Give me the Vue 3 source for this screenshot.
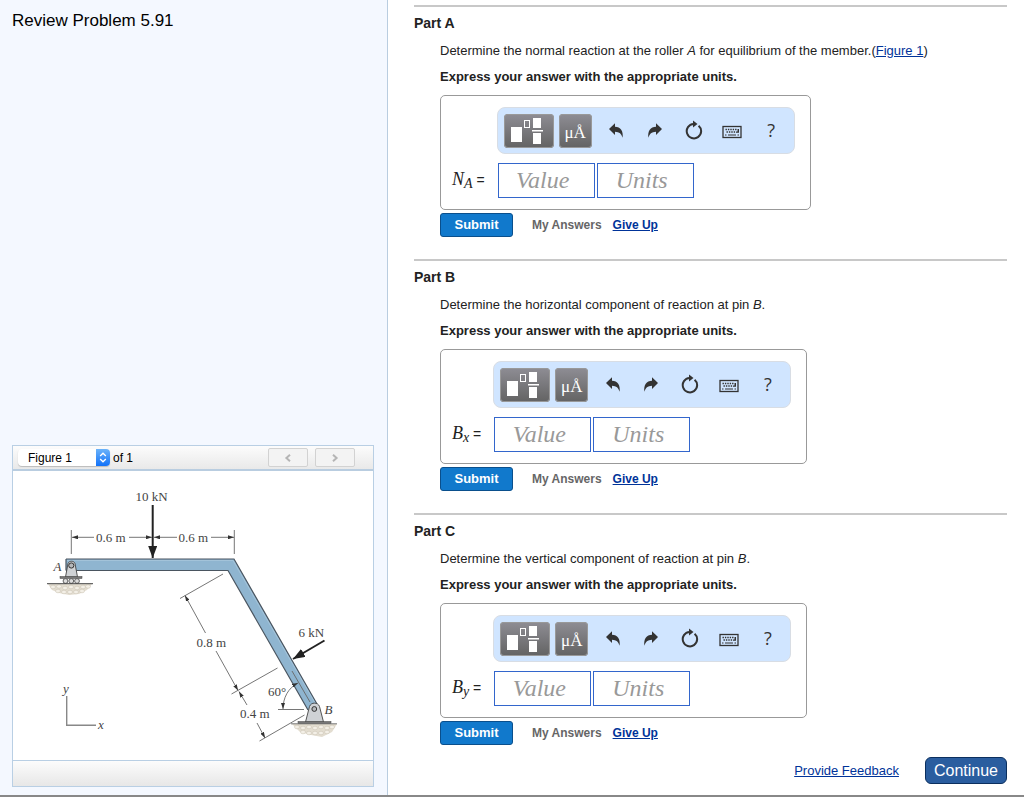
<template>
  <div class="page">
    <aside class="sidebar">
      <h1>Review Problem 5.91</h1>

      <section class="figure-panel">
        <div class="figure-bar">
          <label class="figure-select">
            <select v-model="figure" aria-label="Figure">
              <option value="1">Figure 1</option>
            </select>
            <svg class="stepper" viewBox="0 0 14 18" aria-hidden="true">
              <path d="M4 7.5l3-3 3 3M4 10.5l3 3 3-3" />
            </svg>
          </label>
          <span class="figure-count">of 1</span>
          <div class="figure-nav">
            <button type="button" aria-label="Previous figure">
              <svg viewBox="0 0 8 8"><path d="M6 0.8L2.4 4L6 7.2" /></svg>
            </button>
            <button type="button" aria-label="Next figure">
              <svg viewBox="0 0 8 8"><path d="M2 0.8L5.6 4L2 7.2" /></svg>
            </button>
          </div>
        </div>

        <svg class="diagram" viewBox="13 471 360 289" role="img" aria-label="Bent member with roller at A and pin at B">
          <defs>
            <marker id="tip" viewBox="0 0 6 4" refX="6" refY="2" markerWidth="6" markerHeight="4" markerUnits="userSpaceOnUse" orient="auto-start-reverse">
              <path d="M0 0L6 2L0 4z" fill="#333" />
            </marker>
            <marker id="load" viewBox="0 0 12 9" refX="12" refY="4.5" markerWidth="12" markerHeight="9" markerUnits="userSpaceOnUse" orient="auto">
              <path d="M0 0L12 4.5L0 9z" fill="#222" />
            </marker>
          </defs>

          <!-- ground -->
          <g class="ground">
            <path d="M48 584H92L87 590L79 594L69 595L59 593L52 590z" />
            <path d="M292 724H337L332 732L322 737L311 735L300 732z" />
            <ellipse v-for="(s, i) in stones" :key="i" :cx="s[0]" :cy="s[1]" rx="2.5" ry="1.8" />
          </g>

          <!-- member -->
          <path class="member" d="M66 559H234L317 704L308 710L228 570.5H66z" />
          <path class="edge" d="M66 559H234L317 704M66 570.5H228L308 710M66 559V570.5" />
          <path class="shine" d="M67 560.5H233L315 703" />

          <!-- roller A -->
          <path class="bracket" d="M65.5 577L68 563.5C69 560.5 74 560.5 75 563.5L77.5 577z" />
          <circle class="pin" cx="71.3" cy="565.5" r="2.6" />
          <rect class="plate" x="60" y="576.5" width="22" height="2" />
          <circle v-for="x in [65.5, 71.3, 77]" :key="x" class="wheel" :cx="x" cy="581" r="2.4" />
          <path class="thick" d="M47 583.7H93" />

          <!-- pin B -->
          <path class="bracket" d="M305.5 722L309.5 706.5C311 702 318 702 319.5 706.5L323.5 722z" />
          <circle class="pin" cx="314.3" cy="709" r="2.4" />
          <rect class="plate" x="298" y="721.5" width="33" height="2" />
          <path class="thin" d="M291 723.8H337" />

          <!-- loads -->
          <path class="force" d="M152.7 505V558" marker-end="url(#load)" />
          <path class="force" d="M324.5 640.5L293 659" marker-end="url(#load)" />

          <!-- dimensions -->
          <g class="thin">
            <path d="M71.3 530V554M234.3 530V554" />
            <path d="M94 537.3H72" marker-end="url(#tip)" />
            <path d="M129 537.3H152" marker-end="url(#tip)" />
            <path d="M177 537.3H154" marker-end="url(#tip)" />
            <path d="M211 537.3H234" marker-end="url(#tip)" />
            <path d="M180 598.5L223 574M231.5 694L277.5 668M259.5 741L304.5 715" />
            <path d="M205.5 633L185 595.5" marker-end="url(#tip)" />
            <path d="M216 651L238 690.5" marker-end="url(#tip)" />
            <path d="M247 705L239 691.5" marker-end="url(#tip)" />
            <path d="M257 723L265 738" marker-end="url(#tip)" />
            <path d="M278 709.5H304M292 671L310 702" />
            <path d="M283 709C283 698 288 688 298 683" marker-start="url(#tip)" marker-end="url(#tip)" />
          </g>
          <path class="axes" d="M66.7 696V725.3H96" />

          <g class="labels">
            <text x="135.5" y="501">10 kN</text>
            <text x="96" y="541.5">0.6 m</text>
            <text x="178.5" y="541.5">0.6 m</text>
            <text x="196.5" y="646.5">0.8 m</text>
            <text x="240" y="718">0.4 m</text>
            <text x="268" y="696">60°</text>
            <text x="298.5" y="637">6 kN</text>
            <text class="it" x="53.5" y="571">A</text>
            <text class="it" x="324.5" y="714">B</text>
            <text class="it" x="63" y="693">y</text>
            <text class="it" x="98" y="729">x</text>
          </g>
        </svg>

        <div class="figure-foot"></div>
      </section>
    </aside>

    <main class="content">
      <section class="part" v-for="part in parts" :key="part.id">
        <h2>Part {{ part.id }}</h2>
        <div class="part-body">
          <p>
            {{ part.text }} <i>{{ part.point }}</i>{{ part.rest }}<template v-if="part.link">(<a href="#">Figure 1</a>)</template>
          </p>
          <p class="express">Express your answer with the appropriate units.</p>

          <div class="answer">
            <div class="toolbar">
              <button type="button" class="tool-dark wide" aria-label="Templates">
                <svg viewBox="0 0 50 34">
                  <path d="M7 13H18V28H7zM29 4H37V14H29zM29 19H37V30H29zM28 16H39V17.5H28z" fill="#fff" />
                  <rect x="20.5" y="6.5" width="5" height="7" fill="none" stroke="#fff" />
                </svg>
              </button>
              <button type="button" class="tool-dark symbols" aria-label="Symbols">μÅ</button>
              <div class="tools">
                <button type="button" aria-label="Undo">
                  <svg viewBox="0 0 16 16">
                    <path d="M1 7L7 1.2V4.8C12.5 5 15.5 9 14.6 15.8C13.5 11.8 11.5 9.8 7 9.7V13z" />
                  </svg>
                </button>
                <button type="button" aria-label="Redo">
                  <svg viewBox="0 0 16 16">
                    <path d="M15 7L9 1.2V4.8C3.5 5 0.5 9 1.4 15.8C2.5 11.8 4.5 9.8 9 9.7V13z" />
                  </svg>
                </button>
                <button type="button" aria-label="Reset">
                  <svg class="large" viewBox="0 0 20 20">
                    <path d="M14.6 5.7A7.2 7.2 0 1 1 9.5 4" fill="none" stroke="#333" stroke-width="2" />
                    <path d="M9 0.5L13.5 4L9 7.5z" />
                  </svg>
                </button>
                <button type="button" aria-label="Keyboard">
                  <svg class="large" viewBox="0 0 20 20">
                    <rect x="1" y="6.5" width="18" height="11" fill="none" stroke="#333" stroke-width="1.3" />
                    <path d="M3.5 9.5H15M4.5 12H14" fill="none" stroke="#333" stroke-width="1.4" stroke-dasharray="1.4 1" />
                    <path d="M15.5 9H17V12.8H14V11.6H15.5zM3 14.4H4.5V15.6H3zM6 14.4H14V15.6H6zM15.5 14.4H17V15.6H15.5z" />
                  </svg>
                </button>
                <button type="button" class="help" aria-label="Help">?</button>
              </div>
            </div>
            <label class="symbol" :for="'value-' + part.id">
              <i>{{ part.symbol }}<sub>{{ part.sub }}</sub></i> =
            </label>
            <div class="fields">
              <input :id="'value-' + part.id" v-model="part.value" type="text" placeholder="Value" />
              <input v-model="part.units" type="text" placeholder="Units" aria-label="Units" />
            </div>
          </div>

          <div class="actions">
            <button type="button" class="submit">Submit</button>
            <span class="my-answers">My Answers</span>
            <a href="#">Give Up</a>
          </div>
        </div>
      </section>

      <footer class="footer">
        <a href="#">Provide Feedback</a>
        <button type="button" class="continue">Continue</button>
      </footer>
    </main>
  </div>
</template>

<script setup>
import { ref } from 'vue'

const figure = ref('1')

const parts = ref([
  {
    id: 'A',
    text: 'Determine the normal reaction at the roller',
    point: 'A',
    rest: ' for equilibrium of the member.',
    link: true,
    symbol: 'N',
    sub: 'A',
    value: '',
    units: ''
  },
  {
    id: 'B',
    text: 'Determine the horizontal component of reaction at pin',
    point: 'B',
    rest: '.',
    symbol: 'B',
    sub: 'x',
    value: '',
    units: ''
  },
  {
    id: 'C',
    text: 'Determine the vertical component of reaction at pin',
    point: 'B',
    rest: '.',
    symbol: 'B',
    sub: 'y',
    value: '',
    units: ''
  }
])

// stones under the two supports
const stones = [
  [53, 587], [59, 586.5], [65, 588], [71, 587], [77, 588], [83, 587], [88, 586.5],
  [58, 591], [64, 592], [70, 592], [76, 592], [82, 591],
  [297, 727], [303, 728], [309, 727], [315, 728], [321, 727], [327, 728], [332, 727],
  [303, 732], [309, 733], [315, 733], [321, 733], [327, 732]
]
</script>

<style>
body {
  margin: 0;
  background: #fff;
}
</style>

<style scoped>
* {
  box-sizing: border-box;
}
.page {
  display: flex;
  min-height: 100vh;
  border-bottom: 2px solid #888;
  font-family: "Liberation Sans", Arial, sans-serif;
  font-size: 13px;
  color: #222;
}
button {
  font-family: inherit;
  cursor: pointer;
}
a {
  color: #039;
}

/* left column */
.sidebar {
  flex: 0 0 388px;
  display: flex;
  flex-direction: column;
  padding: 11px 13px 8px 12px;
  background: #f4f8ff;
  border-right: 1px solid #b9cde0;
}
h1 {
  margin: 0;
  font-size: 17px;
  line-height: 20px;
  font-weight: normal;
  color: #000;
}
.figure-panel {
  margin-top: auto;
  border: 1px solid #b9cfe4;
  background: #fff;
}
.figure-bar {
  display: flex;
  align-items: center;
  height: 25px;
  padding: 0 18px 0 5px;
  background: linear-gradient(#fcfcfc, #e9e9e9);
  border-bottom: 2px solid #b9cde0;
  font-size: 12px;
  color: #000;
}
.figure-select {
  position: relative;
  display: flex;
}
.figure-select select {
  appearance: none;
  width: 92px;
  height: 17px;
  padding: 0 18px 0 10px;
  border: 0;
  border-radius: 4px;
  background: #fff;
  box-shadow: 0 1px 1px #bbb;
  font-family: inherit;
  font-size: 12px;
  color: #000;
}
.stepper {
  position: absolute;
  top: 0;
  right: 0;
  width: 14px;
  height: 17px;
  border-radius: 0 4px 4px 0;
  background: linear-gradient(#6bb3fa, #1272f9);
  pointer-events: none;
}
.stepper path {
  fill: none;
  stroke: #fff;
  stroke-width: 1.4;
}
.figure-count {
  margin-left: 3px;
}
.figure-nav {
  display: flex;
  gap: 7px;
  margin-left: auto;
}
.figure-nav button {
  display: flex;
  align-items: center;
  justify-content: center;
  width: 40px;
  height: 19px;
  padding: 0;
  border: 1px solid #d2d2d2;
  border-radius: 2px;
  background: #f3f3f3;
}
.figure-nav svg {
  width: 8px;
  height: 8px;
  fill: none;
  stroke: #b5b5b5;
  stroke-width: 2;
}
.figure-foot {
  height: 26px;
  border-top: 1px solid #b9cfe4;
  background: linear-gradient(#fcfcfc, #e7e7e7);
}

/* diagram */
.diagram {
  display: block;
  width: 100%;
}
.ground path {
  fill: #e3ddd0;
}
.ground ellipse {
  fill: #f3efe6;
  stroke: #cfc8b8;
  stroke-width: 0.6;
}
.member {
  fill: #8fb5d0;
}
.edge {
  fill: none;
  stroke: #4a5560;
  stroke-width: 1.2;
}
.shine {
  fill: none;
  stroke: #a3c3d9;
  stroke-width: 1;
}
.bracket {
  fill: #cfd2d5;
  stroke: #444;
  stroke-width: 0.9;
}
.pin {
  fill: #b5b8bb;
  stroke: #333;
}
.plate {
  fill: #777;
  stroke: #444;
  stroke-width: 0.5;
}
.wheel {
  fill: #ddd;
  stroke: #444;
  stroke-width: 0.8;
}
.force {
  stroke: #222;
  stroke-width: 2;
}
.thick {
  stroke: #444;
}
.thin {
  fill: none;
  stroke: #666;
  stroke-width: 0.9;
}
.axes {
  fill: none;
  stroke: #888;
  stroke-width: 1.4;
}
.labels {
  font-family: "Liberation Serif", "Times New Roman", serif;
  font-size: 13px;
  fill: #444;
}
.it {
  font-style: italic;
}

/* right column */
.content {
  flex: 1;
  min-width: 0;
  padding: 5px 17px 0 26px;
}
.part {
  padding: 7px 0 22px;
  border-top: 2px solid #c8c8c8;
}
h2 {
  margin: 0;
  font-size: 14px;
  line-height: 18px;
}
.part-body {
  padding-left: 26px;
}
p {
  margin: 11px 0 0;
  line-height: 16px;
}
.part-body .express {
  margin-top: 10px;
  font-weight: bold;
}
.answer {
  display: inline-grid;
  grid-template-columns: auto 298px;
  row-gap: 9px;
  margin-top: 10px;
  padding: 11px 15px 11px 11px;
  border: 1px solid #999;
  border-radius: 5px;
  vertical-align: top;
}
.toolbar {
  grid-column: 2;
  display: flex;
  gap: 5px;
  height: 47px;
  padding: 6px 3px 5px 6px;
  border: 1px solid #d8dde4;
  border-radius: 8px;
  background: #d0e5ff;
}
.tool-dark {
  width: 33px;
  height: 34px;
  padding: 0;
  border: 0;
  border-radius: 4px;
  background: linear-gradient(#8e8d94, #636363);
  box-shadow: inset 0 0 0 1px #999;
  color: #fff;
}
.tool-dark.wide {
  width: 50px;
}
.tool-dark.symbols {
  padding-top: 3px;
  font-family: "Liberation Serif", "Times New Roman", serif;
  font-size: 17px;
}
.tool-dark svg {
  display: block;
  width: 100%;
}
.tools {
  flex: 1;
  display: flex;
}
.tools button {
  flex: 1;
  display: flex;
  align-items: center;
  justify-content: center;
  height: 32px;
  padding: 0;
  border: 0;
  background: none;
  color: #333;
}
.tools svg {
  width: 16px;
  height: 16px;
  fill: #333;
}
.tools .large {
  width: 20px;
  height: 20px;
}
.tools .help {
  font-family: "Open Sans", sans-serif;
  font-size: 18px;
}
.symbol {
  grid-column: 1;
  align-self: center;
  padding: 0 12px 2px 0;
  font-size: 14px;
  line-height: 20px;
  white-space: nowrap;
}
.symbol i {
  font-family: "Liberation Serif", "Times New Roman", serif;
  font-size: 18px;
}
.symbol sub {
  font-size: 14px;
  line-height: 0;
  vertical-align: -3px;
}
.fields {
  display: flex;
  gap: 2px;
  padding-left: 1px;
}
.fields input {
  width: 97px;
  height: 35px;
  padding: 0 7px 0 0;
  border: 1px solid #36c;
  border-radius: 0;
  background: #fff;
  font-family: "Liberation Serif", "Times New Roman", serif;
  font-size: 24px;
  text-align: center;
}
.fields input::placeholder {
  color: #999;
  font-style: italic;
  opacity: 1;
}
.actions {
  display: flex;
  align-items: center;
  margin-top: 3px;
  font-size: 12px;
  font-weight: bold;
}
.submit {
  width: 73px;
  height: 24px;
  padding: 0 0 1px;
  border: 1px solid #0a4f8c;
  border-radius: 3px;
  background: #1179cc;
  font-size: 13px;
  font-weight: bold;
  color: #fff;
}
.my-answers {
  margin: 0 11px 0 19px;
  color: #666;
}
.footer {
  display: flex;
  align-items: center;
  justify-content: flex-end;
  gap: 26px;
  margin-top: -10px;
  padding-bottom: 10px;
}
.continue {
  height: 27px;
  padding: 0 8px;
  border: 1px solid #0b2f5e;
  border-radius: 6px;
  background: #2a5d9f;
  font-size: 16px;
  color: #fff;
}
</style>
